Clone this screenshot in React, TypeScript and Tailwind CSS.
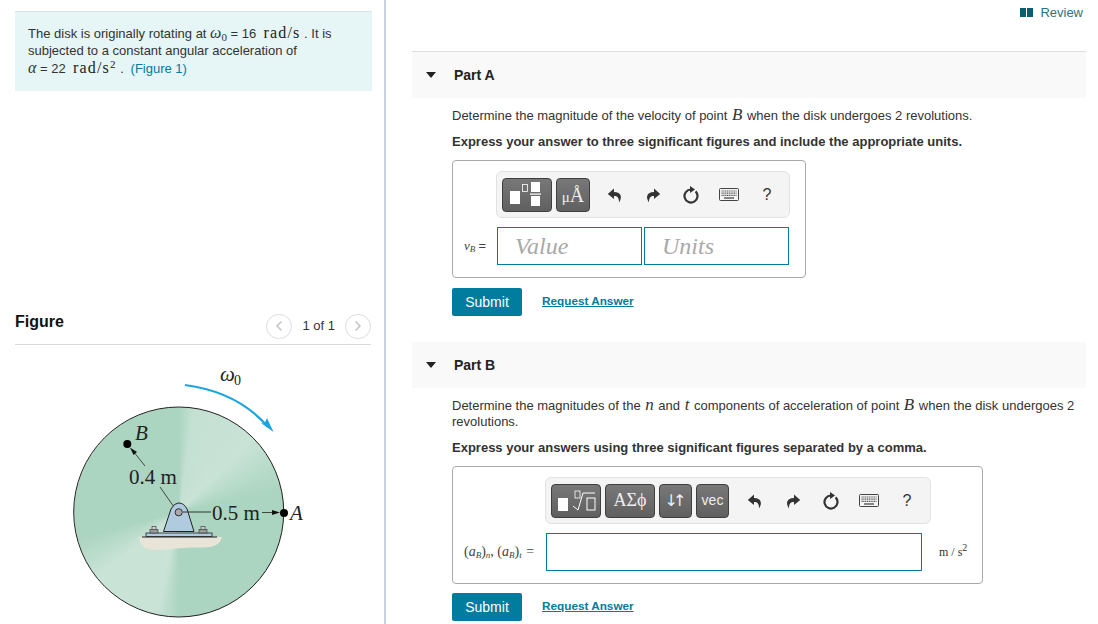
import { ChevronLeft, ChevronRight } from "lucide-react";
import type { ReactNode } from "react";

const serif = "font-['Liberation_Serif',serif]";
const mathVar = `${serif} italic text-[17px] leading-none px-[1px]`;
const unit = `${serif} text-[16px] leading-none tracking-[1.2px] text-[#222]`;

function Undo({ flip }: { flip?: boolean }) {
  return (
    <svg width="16" height="16" viewBox="0 0 16 16" className={flip ? "-scale-x-100" : ""}>
      <path d="M7 1.5 L0.8 7 L7 12 V9 C10.5 9 12.2 10.8 12 15.5 C15.5 10.5 14.5 5 7 5 Z" fill="#333" />
    </svg>
  );
}

function Reset() {
  return (
    <svg width="18" height="18" viewBox="0 0 18 18">
      <path d="M13.6 5.4 A6.5 6.5 0 1 1 9 3.5" fill="none" stroke="#333" strokeWidth="2.2" />
      <polygon points="8,0 13,3.5 8,7" fill="#333" />
    </svg>
  );
}

function KeyboardIcon() {
  return (
    <svg width="20" height="13" viewBox="0 0 20 13">
      <rect x="0.5" y="0.5" width="19" height="12" rx="1" fill="#f4f4f4" stroke="#444" />
      <path d="M2.5 3h15M2.5 5.2h15M2.5 7.4h15" stroke="#555" strokeWidth="1.2" strokeDasharray="1.2 0.6" />
      <path d="M5 10h10" stroke="#555" strokeWidth="1.4" />
    </svg>
  );
}

function ToolButton({ w, children }: { w: string; children: ReactNode }) {
  return (
    <div className={`${w} h-[34px] flex items-center justify-center rounded-[4px] border border-[#3f3f3f] bg-linear-to-b from-[#787878] to-[#606060] text-white`}>
      {children}
    </div>
  );
}

function ToolIcons() {
  return (
    <div className="flex items-center gap-[18px]">
      <div className="w-5 flex justify-center"><Undo /></div>
      <div className="w-5 flex justify-center"><Undo flip /></div>
      <div className="w-5 flex justify-center"><Reset /></div>
      <div className="w-5 flex justify-center"><KeyboardIcon /></div>
      <div className="w-5 flex justify-center text-[16px] text-[#333]">?</div>
    </div>
  );
}

function PartHeader({ label }: { label: string }) {
  return (
    <div className="h-[46px] bg-[#f9f9f9] flex items-center pl-[14px]">
      <div className="w-0 h-0 border-l-[5.5px] border-r-[5.5px] border-t-[6px] border-l-transparent border-r-transparent border-t-[#222]" />
      <span className="ml-[18px] text-[14px] font-bold text-[#222]">{label}</span>
    </div>
  );
}

function SubmitRow() {
  return (
    <div className="flex items-center">
      <div className="w-[70px] h-[28px] rounded-[2px] bg-[#007c9e] text-white text-[14px] flex items-center justify-center">Submit</div>
      <span className="ml-[20px] mb-[2px] text-[11.75px] font-bold text-[#007c9e] underline">Request Answer</span>
    </div>
  );
}

function Figure() {
  return (
    <div className="relative flex-1">
      <div className="absolute left-[59px] top-[62px] w-[210px] h-[210px] rounded-full bg-[conic-gradient(#abd5c0_0deg,#c4e0d3_8deg,#c9e3d7_45deg,#abd5c0_78deg,#abd5c0_180deg,#c9e3d7_192deg,#c9e3d7_232deg,#abd5c0_256deg,#abd5c0_360deg)]" />
      <svg width="356" height="279" viewBox="15 345 356 279" className="absolute left-0 top-0">
        <circle cx="178.7" cy="512" r="105" fill="none" stroke="#222" strokeWidth="1" />
        <path d="M185 385 Q238 392 268 427" fill="none" stroke="#1ba5e0" strokeWidth="2.2" />
        <polygon points="273.5,432 261,423 264.5,423.5 267,418" fill="#1ba5e0" />
        <text x="220" y="381" fontFamily="Liberation Serif" fontStyle="italic" fontSize="21" fill="#222">ω</text>
        <text x="234" y="385" fontFamily="Liberation Serif" fontSize="14" fill="#222">0</text>
        <text x="135" y="440" fontFamily="Liberation Serif" fontStyle="italic" fontSize="21" fill="#222">B</text>
        <circle cx="127.3" cy="444" r="4" fill="#000" />
        <path d="M145 466 L133 451" stroke="#222" strokeWidth="0.8" />
        <polygon points="130,447.5 137,452 133.5,455" fill="#111" />
        <text x="129" y="484" fontFamily="Liberation Serif" fontSize="21" fill="#222">0.4 m</text>
        <path d="M160 487 L174 507" stroke="#222" strokeWidth="0.8" />
        <path d="M163.5 531.5 L171 509 Q174 503 178.7 503 Q184 503 187 509 L194 531.5 Z" fill="#b0cbe0" stroke="#222" strokeWidth="1" />
        <circle cx="178.7" cy="512.3" r="3.6" fill="#a9a9a9" stroke="#333" strokeWidth="1" />
        <path d="M183 512 H211" stroke="#222" strokeWidth="0.9" />
        <text x="212" y="520" fontFamily="Liberation Serif" fontSize="21" fill="#222">0.5 m</text>
        <path d="M262 512.5 H276" stroke="#222" strokeWidth="0.8" />
        <polygon points="280,512.5 272,510 272,515" fill="#111" />
        <circle cx="284" cy="513" r="4" fill="#000" />
        <text x="290" y="520" fontFamily="Liberation Serif" fontStyle="italic" fontSize="21" fill="#222">A</text>
        <path d="M139 537 H222 C220 546 212 548 196 547.5 C178 547 160 552 148 549 C142 547 140 543 139 537 Z" fill="#e8e5d8" />
        <rect x="146" y="533" width="66" height="3.6" fill="#b0cbe0" stroke="#222" strokeWidth="0.8" />
        <path d="M142 537 H217" stroke="#222" strokeWidth="1" />
        <rect x="150" y="529.5" width="8" height="3.5" fill="#999" stroke="#333" strokeWidth="0.6" />
        <rect x="152" y="526.5" width="4" height="3" fill="#ccc" stroke="#333" strokeWidth="0.6" />
        <rect x="199" y="529.5" width="8" height="3.5" fill="#999" stroke="#333" strokeWidth="0.6" />
        <rect x="201" y="526.5" width="4" height="3" fill="#ccc" stroke="#333" strokeWidth="0.6" />
      </svg>
    </div>
  );
}

function LeftColumn() {
  return (
    <div className="w-[386px] shrink-0 border-r-2 border-[#c5d3e2] pl-[15px] pr-[13px] flex flex-col">
      <div className="mt-[11px] -mr-[1px] h-[80px] bg-[#e6f5f6] border-t border-[#d9e4ea] pl-[13px] pt-[13px] text-[13px] leading-[17px] text-[#333]">
        <p>
          The disk is originally rotating at <i className={`${serif} text-[16px] leading-none`}>ω</i><sub className={`${serif} text-[11px] leading-none`}>0</sub> = 16 &nbsp;<span className={unit}>rad/s</span> . It is
        </p>
        <p>subjected to a constant angular acceleration of</p>
        <p className="mt-[1px]">
          <i className={`${serif} text-[16px] leading-none`}>α</i> = 22 &nbsp;<span className={unit}>rad/s<sup className="text-[11px] leading-none">2</sup></span> . <span className="ml-[3px] text-[#007c9e]">(Figure 1)</span>
        </p>
      </div>
      <div className="mt-[219px] h-[35px] border-b border-[#d9dcdf] flex items-center justify-between pb-[1px]">
        <span className="mb-[9px] text-[16px] font-bold text-[#111]">Figure</span>
        <div className="flex items-center mb-[1px] text-[13px] text-[#333]">
          <div className="w-[26px] h-[25px] rounded-full border border-[#ddd] flex items-center justify-center"><ChevronLeft size={16} strokeWidth={2.5} color="#c4c4c4" /></div>
          <span className="mx-[10px]">1 of 1</span>
          <div className="w-[26px] h-[25px] rounded-full border border-[#ddd] flex items-center justify-center"><ChevronRight size={16} strokeWidth={2.5} color="#c4c4c4" /></div>
        </div>
      </div>
      <Figure />
    </div>
  );
}

function PartA() {
  return (
    <>
      <PartHeader label="Part A" />
      <div className="pl-[40px] pt-[8px]">
        <p className="text-[13px] leading-[16px] text-[#333]">
          Determine the magnitude of the velocity of point <i className={mathVar}>B</i> when the disk undergoes 2 revolutions.
        </p>
        <p className="mt-[10px] text-[13px] leading-[16px] font-bold text-[#333]">Express your answer to three significant figures and include the appropriate units.</p>
        <div className="mt-[10px] w-[354px] h-[118px] rounded-[4px] border border-[#aaa] pt-[10px] pl-[43px]">
          <div className="w-[294px] h-[47px] rounded-[6px] border border-[#e2e2e2] bg-[#f4f4f4] flex items-center pl-[5px]">
            <ToolButton w="w-[50px]">
              <svg width="48" height="32" viewBox="0 0 48 32">
                <rect x="7" y="12" width="10" height="13" fill="#fff" />
                <rect x="19.5" y="5.5" width="5" height="7" fill="none" stroke="#fff" strokeWidth="0.8" />
                <rect x="28" y="3" width="9" height="10" fill="#fff" />
                <rect x="27" y="14.5" width="11" height="1.2" fill="#fff" />
                <rect x="28" y="17" width="9" height="10" fill="#fff" />
              </svg>
            </ToolButton>
            <div className="w-[4px]" />
            <ToolButton w="w-[34px]">
              <span className={`${serif} text-[#eee]`}><span className="text-[15px]">μ</span><span className="text-[20px]">Å</span></span>
            </ToolButton>
            <div className="w-[15px]" />
            <ToolIcons />
          </div>
          <div className="mt-[9px] ml-[1px] flex items-center relative">
            <span className={`absolute -left-[33px] top-[9px] text-[13px] text-[#444] ${serif} italic whitespace-nowrap`}>v<sub className="text-[9px]">B</sub> <span className="not-italic font-['Liberation_Sans',sans-serif]">=</span></span>
            <div className={`w-[145px] h-[38px] border border-[#007c9e] pl-[17px] flex items-center ${serif} italic text-[24px] text-[#a9a9a9]`}>Value</div>
            <div className={`ml-[2px] w-[145px] h-[38px] border border-[#007c9e] pl-[17px] flex items-center ${serif} italic text-[24px] text-[#a9a9a9]`}>Units</div>
          </div>
        </div>
        <div className="mt-[10px]"><SubmitRow /></div>
      </div>
    </>
  );
}

function PartB() {
  return (
    <>
      <PartHeader label="Part B" />
      <div className="pl-[40px] pt-[8px]">
        <p className="text-[13px] leading-[16px] text-[#333] pr-[10px]">
          Determine the magnitudes of the <i className={mathVar}>n</i> and <i className={mathVar}>t</i> components of acceleration of point <i className={mathVar}>B</i> when the disk undergoes 2 revolutions.
        </p>
        <p className="mt-[10px] text-[13px] leading-[16px] font-bold text-[#333]">Express your answers using three significant figures separated by a comma.</p>
        <div className="mt-[10px] w-[531px] h-[118px] rounded-[4px] border border-[#aaa] pt-[10px] pl-[92px]">
          <div className="w-[386px] h-[47px] rounded-[6px] border border-[#e2e2e2] bg-[#f4f4f4] flex items-center pl-[5px]">
            <ToolButton w="w-[50px]">
              <svg width="48" height="32" viewBox="0 0 48 32">
                <rect x="6" y="13" width="10" height="13" fill="#fff" />
                <rect x="23" y="6" width="5" height="7" fill="none" stroke="#fff" strokeWidth="0.8" />
                <path d="M21 21 L26 25 L31 8 H43" fill="none" stroke="#fff" strokeWidth="1" />
                <rect x="35" y="13" width="8" height="12" fill="none" stroke="#fff" strokeWidth="1" />
              </svg>
            </ToolButton>
            <div className="w-[4px]" />
            <ToolButton w="w-[50px]"><span className={`${serif} text-[18px] text-[#eee]`}>ΑΣϕ</span></ToolButton>
            <div className="w-[4px]" />
            <ToolButton w="w-[33px]"><span className="font-['DejaVu_Sans',sans-serif] text-[16px] tracking-[-5px] pr-[5px] text-[#eee]">↓↑</span></ToolButton>
            <div className="w-[4px]" />
            <ToolButton w="w-[33px]"><span className="text-[14px] text-[#eee]">vec</span></ToolButton>
            <div className="w-[16px]" />
            <ToolIcons />
          </div>
          <div className="mt-[9px] flex items-center relative">
            <span className={`absolute -left-[81px] top-[8px] text-[14px] text-[#444] ${serif} whitespace-nowrap`}>
              (<i>a</i><sub className="text-[9px]"><i>B</i></sub>)<sub className="text-[9px]"><i>n</i></sub>, (<i>a</i><sub className="text-[9px]"><i>B</i></sub>)<sub className="text-[9px]"><i>t</i></sub> <span className="ml-[1px]">=</span>
            </span>
            <div className="ml-[1px] w-[376px] h-[38px] border border-[#007c9e]" />
            <span className={`ml-[17px] ${serif} text-[12px] text-[#333]`}>m / s<sup className="text-[10px]">2</sup></span>
          </div>
        </div>
        <div className="mt-[9px]"><SubmitRow /></div>
      </div>
    </>
  );
}

export default function App() {
  return (
    <div className="w-[1098px] h-[624px] overflow-hidden flex bg-white font-['Liberation_Sans',sans-serif]">
      <LeftColumn />
      <div className="flex-1 pl-[26px] pr-[12px]">
        <div className="h-[52px] border-b border-[#ddd] flex justify-end items-start pt-[3px] pr-[3px]">
          <div className="flex items-center gap-[7px] text-[13px] text-[#2f6f80]">
            <svg width="13" height="9" viewBox="0 0 13 9">
              <rect x="0" y="0" width="6" height="9" fill="#0d5c70" />
              <rect x="7" y="0" width="6" height="9" fill="#0d5c70" />
            </svg>
            Review
          </div>
        </div>
        <PartA />
        <div className="h-[26px]" />
        <PartB />
      </div>
    </div>
  );
}
